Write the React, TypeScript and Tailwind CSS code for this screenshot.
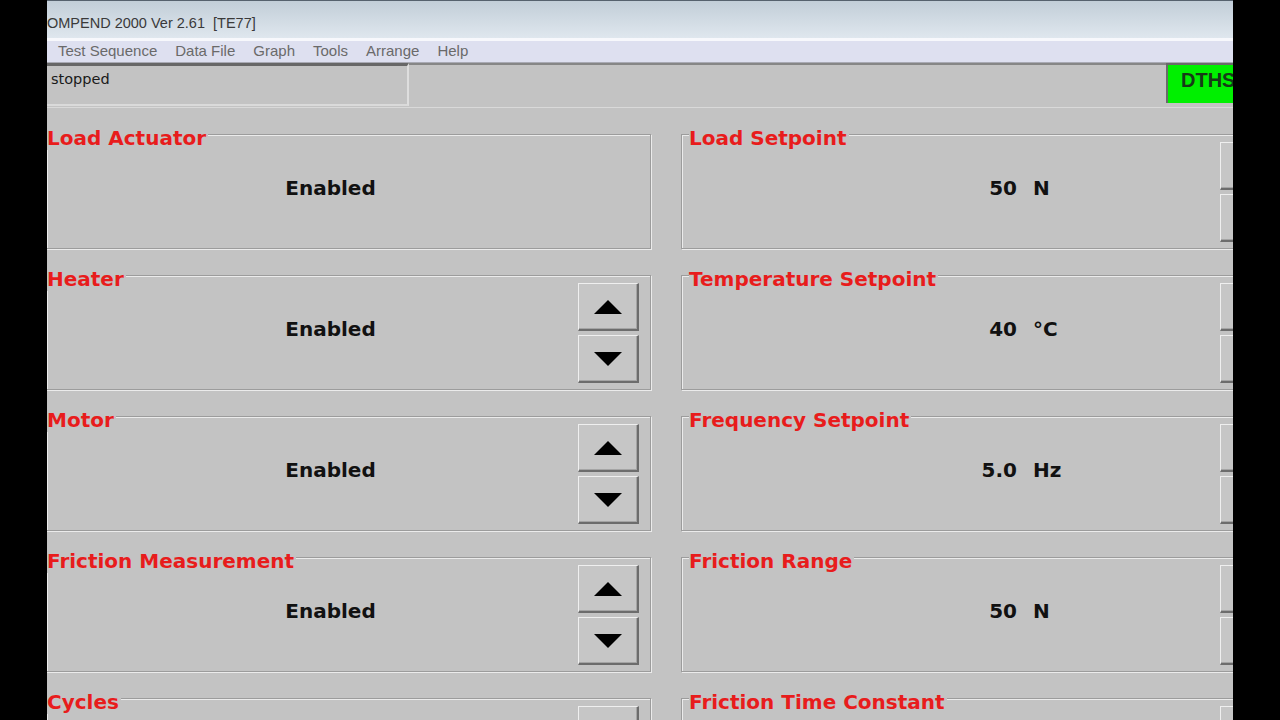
import React from 'react';

const leftBoxes = [
  { title: 'Load Actuator', value: 'Enabled', buttons: false },
  { title: 'Heater', value: 'Enabled', buttons: true },
  { title: 'Motor', value: 'Enabled', buttons: true },
  { title: 'Friction Measurement', value: 'Enabled', buttons: true },
  { title: 'Cycles', value: '', buttons: true },
];

const rightBoxes = [
  { title: 'Load Setpoint', num: '50', unit: 'N' },
  { title: 'Temperature Setpoint', num: '40', unit: '°C' },
  { title: 'Frequency Setpoint', num: '5.0', unit: 'Hz' },
  { title: 'Friction Range', num: '50', unit: 'N' },
  { title: 'Friction Time Constant', num: '', unit: '' },
];

const menu = ['Test Sequence', 'Data File', 'Graph', 'Tools', 'Arrange', 'Help'];

const SpinButton = ({ dir }: { dir: 'up' | 'down' }) => (
  <div className="w-[61px] h-[48px] flex items-center justify-center bg-[#c6c6c6] border-t border-l border-b-2 border-r-2 border-t-[#efefef] border-l-[#efefef] border-b-[#6c6c6c] border-r-[#6c6c6c] shadow-[inset_-1px_-1px_0_#a4a4a4]">
    <svg width="28" height="14" viewBox="0 0 28 14">
      {dir === 'up' ? (
        <path d="M0 14 L14 0 L28 14 Z" fill="#000" />
      ) : (
        <path d="M0 0 L28 0 L14 14 Z" fill="#000" />
      )}
    </svg>
  </div>
);

const Spinner = () => (
  <div className="flex flex-col gap-[4px] pt-[7px] flex-none">
    <SpinButton dir="up" />
    <SpinButton dir="down" />
  </div>
);

const GroupTitle = ({ text, left }: { text: string; left: string }) => (
  <div
    className={`absolute -top-[9px] ${left} bg-[#c3c3c3] pr-[2px] text-[20px] leading-[24px] font-bold text-[#e81c1c] font-['DejaVu_Sans',sans-serif] whitespace-nowrap`}
  >
    {text}
  </div>
);

const boxClass =
  'relative h-[115px] border border-[#9c9c9c] shadow-[inset_1px_1px_0_#ebebeb,1px_1px_0_#ebebeb] flex';

export default function App() {
  return (
    <div className="w-[1280px] h-[720px] bg-black flex overflow-hidden">
      <div className="w-[47px] flex-none" />
      <div className="w-[1186px] h-[720px] flex-none overflow-hidden bg-[#c3c3c3] flex flex-col">
        {/* title bar */}
        <div className="h-[38px] flex-none border-t border-[#56626e] bg-gradient-to-b from-[#c2ced8] to-[#dfe7ee] flex items-center pt-[8px] text-[14.5px] text-[#3a3a3a] font-['Liberation_Sans',Arial,sans-serif] whitespace-pre">
          OMPEND 2000 Ver 2.61  [TE77]
        </div>

        {/* menu */}
        <div className="h-[25px] flex-none border-t-[3px] border-[#f7f8fc] bg-[#dee0f0] flex items-center gap-[18px] pl-[11px] text-[15px] text-[#6a6a6a] font-['Liberation_Sans',Arial,sans-serif] border-b border-b-[#a9aab4]">
          {menu.map(m => (
            <span key={m}>{m}</span>
          ))}
        </div>

        {/* status strip */}
        <div className="h-[45px] flex-none flex items-start border-b border-[#d9d9d9]">
          <div className="w-[362px] h-[43px] flex-none border-t-[3px] border-t-[#676767] border-r-2 border-r-[#dedede] border-b-2 border-b-[#dadada] pl-[4px] pt-[3px] text-[14.5px] leading-[20px] text-[#1a1a1a] font-['DejaVu_Sans',sans-serif]">
            stopped
          </div>
          <div className="flex-1 h-[43px] border-t-2 border-[#868686]" />
          <div className="w-[67px] h-[40px] flex-none bg-[#00f000] border-t-2 border-l-2 border-[#6a6a6a] pl-[13px] pt-[4px] text-[20px] leading-[22px] font-bold text-[#173a17] font-['Liberation_Sans',Arial,sans-serif] whitespace-nowrap">
            DTHS
          </div>
        </div>

        {/* group boxes */}
        <div className="ml-[-1px] pt-[26px] grid grid-cols-[605px_640px] gap-x-[30px] gap-y-[26px]">
          {leftBoxes.map((l, i) => {
            const r = rightBoxes[i];
            return (
              <React.Fragment key={l.title}>
                <div className={boxClass}>
                  <GroupTitle text={l.title} left="left-[0px]" />
                  <div className="w-[531px] flex-none pl-[36px] pb-[8px] flex items-center justify-center text-[20px] font-bold text-[#111] font-['DejaVu_Sans',sans-serif]">
                    {l.value}
                  </div>
                  {l.buttons ? <Spinner /> : <div className="w-[61px] flex-none" />}
                </div>
                <div className={boxClass}>
                  <GroupTitle text={r.title} left="left-[7px]" />
                  <div className="w-[538px] flex-none pl-[255px] pb-[8px] flex items-center gap-[16px] text-[20px] font-bold text-[#111] font-['DejaVu_Sans',sans-serif]">
                    <span className="w-[80px] text-right">{r.num}</span>
                    <span>{r.unit}</span>
                  </div>
                  <Spinner />
                </div>
              </React.Fragment>
            );
          })}
        </div>
      </div>
    </div>
  );
}
